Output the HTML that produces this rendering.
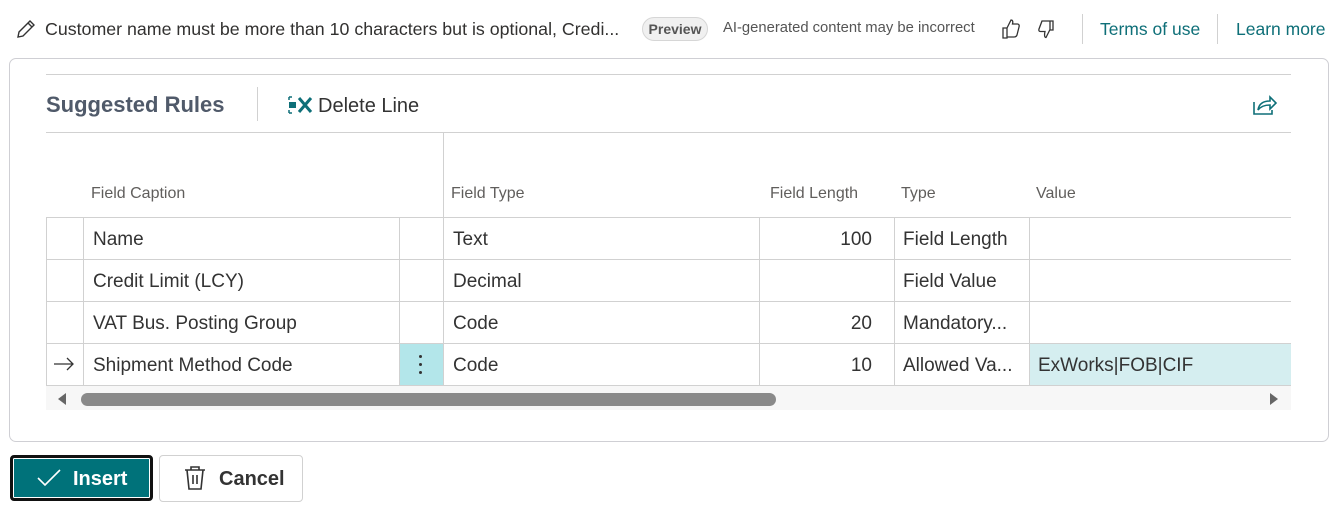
<!DOCTYPE html>
<html><head><style>
*{box-sizing:border-box;margin:0;padding:0}
body{width:1338px;height:508px;background:#fff;font-family:"Liberation Sans",sans-serif;color:#212121;position:relative;overflow:hidden}
.a{position:absolute}
.t{font-size:17.8px;color:#323130;white-space:nowrap}
.hl{position:absolute;height:1px;background:#d1d1d1}
.vl{position:absolute;width:1px;background:#d1d1d1}
.cell{position:absolute;font-size:19px;color:#333;white-space:nowrap;line-height:42px}
.hd{position:absolute;font-size:16px;color:#605e5c;top:185px}
</style></head><body>
<svg class="a" style="left:15px;top:18px" width="22" height="22" viewBox="0 0 22 22"><path d="M3 19l1-5L15 3l4 4L8 18z M13 5l4 4" fill="none" stroke="#333" stroke-width="1.4"/></svg>
<div class="a t" style="left:45px;top:19px">Customer name must be more than 10 characters but is optional, Credi...</div>
<div class="a" style="left:642px;top:17px;width:66px;height:24px;border:1px solid #d6d6d6;border-radius:12px;background:#f0f0f0;font-size:14px;font-weight:bold;color:#555;text-align:center;line-height:22px">Preview</div>
<div class="a" style="left:723px;top:20px;font-size:14.8px;color:#555;white-space:nowrap">AI-generated content may be incorrect</div>
<svg class="a" style="left:999px;top:17px" width="24" height="24" viewBox="0 0 24 24"><path d="M4 11h4v10H4z M8 11l4-8c2 0 2 2 1.5 4h5c1.5 0 2 1.5 1.5 3l-2 8c-.5 1.5-1.5 2-3 2H8" fill="none" stroke="#333" stroke-width="1.3"/></svg>
<svg class="a" style="left:1034px;top:17px" width="24" height="24" viewBox="0 0 24 24"><path d="M8 4l-3 8c-.5 1.5 0 2.5 1.5 2.5H11c-.5 2 -1 6 1 6l4-8V4z M16 4h3v9h-3" fill="none" stroke="#333" stroke-width="1.3"/></svg>
<div class="vl" style="left:1082px;top:14px;height:30px"></div>
<div class="a" style="left:1100px;top:19px;font-size:17.5px;color:#0e6f78">Terms of use</div>
<div class="vl" style="left:1217px;top:14px;height:30px"></div>
<div class="a" style="left:1236px;top:19px;font-size:17.5px;color:#0e6f78">Learn more</div>

<div class="a" style="left:9px;top:58px;width:1320px;height:384px;border:1px solid #cfcfd4;border-radius:7px"></div>
<div class="hl" style="left:46px;top:74px;width:1245px"></div>
<div class="a" style="left:46px;top:92px;font-size:22px;font-weight:bold;color:#505a6a">Suggested Rules</div>
<div class="vl" style="left:257px;top:87px;height:34px"></div>
<svg class="a" style="left:287px;top:95px" width="26" height="20" viewBox="0 0 26 20"><path d="M2 2h3M2 18h3M2 2v3M2 15v3" stroke="#0e6f78" stroke-width="1.5" fill="none"/><rect x="2" y="7" width="7" height="6" fill="#0e6f78"/><path d="M12 3l12 14M24 3L12 17" stroke="#0e6f78" stroke-width="3"/></svg>
<div class="a" style="left:318px;top:95px;font-size:20px;color:#333">Delete Line</div>
<svg class="a" style="left:1252px;top:92px" width="26" height="24" viewBox="0 0 26 24"><path d="M2 10v12h18v-4" fill="none" stroke="#0e6f78" stroke-width="1.6"/><path d="M6 18c1-7 6-9 12-9V5l6 6-6 6v-4c-5 0-9 1-12 5z" fill="none" stroke="#0e6f78" stroke-width="1.6"/></svg>
<div class="hl" style="left:46px;top:132px;width:1245px"></div>
<div class="vl" style="left:443px;top:132px;height:85px"></div>
<div class="hd" style="left:91px">Field Caption</div>
<div class="hd" style="left:451px">Field Type</div>
<div class="hd" style="left:770px">Field Length</div>
<div class="hd" style="left:901px">Type</div>
<div class="hd" style="left:1036px">Value</div>

<div class="a" style="left:399px;top:343px;width:44px;height:42px;background:#b3e6ea"></div>
<div class="a" style="left:1029px;top:343px;width:262px;height:42px;background:#d5eef0"></div>
<div class="hl" style="left:46px;top:217px;width:1245px"></div>
<div class="hl" style="left:46px;top:259px;width:1245px"></div>
<div class="hl" style="left:46px;top:301px;width:1245px"></div>
<div class="hl" style="left:46px;top:343px;width:1245px"></div>
<div class="hl" style="left:46px;top:385px;width:1245px"></div>
<div class="vl" style="left:46px;top:217px;height:168px"></div>
<div class="vl" style="left:83px;top:217px;height:168px"></div>
<div class="vl" style="left:399px;top:217px;height:168px"></div>
<div class="vl" style="left:443px;top:217px;height:168px"></div>
<div class="vl" style="left:759px;top:217px;height:168px"></div>
<div class="vl" style="left:894px;top:217px;height:168px"></div>
<div class="vl" style="left:1029px;top:217px;height:168px"></div>

<div class="cell" style="left:93px;top:219px">Name</div>
<div class="cell" style="left:453px;top:219px">Text</div>
<div class="cell" style="left:759px;width:113px;text-align:right;top:219px">100</div>
<div class="cell" style="left:903px;top:219px">Field Length</div>
<div class="cell" style="left:93px;top:261px">Credit Limit (LCY)</div>
<div class="cell" style="left:453px;top:261px">Decimal</div>
<div class="cell" style="left:903px;top:261px">Field Value</div>
<div class="cell" style="left:93px;top:303px">VAT Bus. Posting Group</div>
<div class="cell" style="left:453px;top:303px">Code</div>
<div class="cell" style="left:759px;width:113px;text-align:right;top:303px">20</div>
<div class="cell" style="left:903px;top:303px">Mandatory...</div>
<svg class="a" style="left:53px;top:357px" width="22" height="14" viewBox="0 0 22 14"><path d="M1 7h19M14 1l6 6-6 6" fill="none" stroke="#333" stroke-width="1.3"/></svg>
<div class="cell" style="left:93px;top:345px">Shipment Method Code</div>
<div class="a" style="left:419px;top:355px;width:3px;height:3px;border-radius:2px;background:#333;box-shadow:0 8px 0 #333,0 16px 0 #333"></div>
<div class="cell" style="left:453px;top:345px">Code</div>
<div class="cell" style="left:759px;width:113px;text-align:right;top:345px">10</div>
<div class="cell" style="left:903px;top:345px">Allowed Va...</div>
<div class="cell" style="left:1038px;top:345px">ExWorks|FOB|CIF</div>

<div class="a" style="left:46px;top:386px;width:1245px;height:24px;background:#f7f7f7"></div>
<div class="a" style="left:58px;top:393px;width:0;height:0;border-top:6px solid transparent;border-bottom:6px solid transparent;border-right:8px solid #666"></div>
<div class="a" style="left:1270px;top:393px;width:0;height:0;border-top:6px solid transparent;border-bottom:6px solid transparent;border-left:8px solid #666"></div>
<div class="a" style="left:81px;top:393px;width:695px;height:13px;background:#8a8a8a;border-radius:7px"></div>

<div class="a" style="left:10px;top:455px;width:143px;height:46px;background:#00727a;border:3px solid #111;border-radius:4px;box-shadow:inset 0 0 0 1px #fff"></div>
<svg class="a" style="left:36px;top:469px" width="26" height="18" viewBox="0 0 26 18"><path d="M2 9l7 7L24 1" fill="none" stroke="#fff" stroke-width="1.6"/></svg>
<div class="a" style="left:73px;top:468px;font-size:20px;font-weight:bold;color:#fff">Insert</div>
<div class="a" style="left:159px;top:455px;width:144px;height:47px;border:1px solid #d1d1d1;border-radius:4px"></div>
<svg class="a" style="left:183px;top:465px" width="24" height="26" viewBox="0 0 24 26"><path d="M2 5h20M8 5V2h8v3M4 5l2 19h12l2-19M10 10v9M14 10v9" fill="none" stroke="#333" stroke-width="1.6"/></svg>
<div class="a" style="left:219px;top:468px;font-size:20px;font-weight:bold;color:#333">Cancel</div>
</body></html>
